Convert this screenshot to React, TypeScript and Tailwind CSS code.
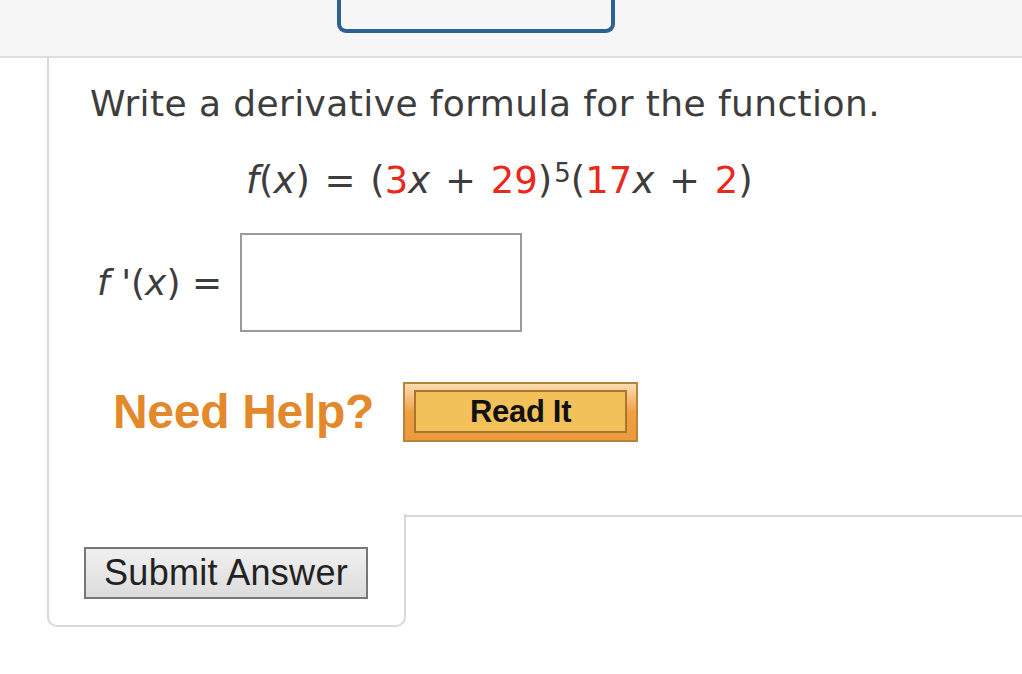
import React from "react";

const verdana = { fontFamily: '"DejaVu Sans", Verdana, sans-serif' };
const arial = { fontFamily: '"Liberation Sans", Arial, sans-serif' };

export default function App() {
  return (
    <div className="w-[1022px] h-[674px] bg-white overflow-hidden text-[#3d3d3d]" style={verdana}>
      {/* top bar */}
      <div className="h-[58px] bg-[#f6f6f6] border-b-2 border-[#dedede]">
        <div className="ml-[337px] w-[278px] h-[33px] border-[4px] border-t-0 border-[#2c6195] rounded-b-[9px]" />
      </div>

      {/* question panel */}
      <div className="ml-[47px] h-[456px] border-l-2 border-[#d9d9d9] pl-[41px] pt-[25px]">
        <p className="text-[36px] leading-[42px] tracking-[0.4px] whitespace-nowrap">
          Write a derivative formula for the function.
        </p>

        <div className="mt-[35px] ml-[156px] text-[37px] leading-[42px] whitespace-nowrap [word-spacing:3px]">
          <i>f</i>(<i>x</i>) = (<span className="text-[#e8291c]">3</span><i>x</i> + <span className="text-[#e8291c]">29</span>)
          <span className="text-[26px] relative -top-[11px] ml-[2px]">5</span>(<span className="text-[#e8291c]">17</span><i>x</i> + <span className="text-[#e8291c]">2</span>)
        </div>

        <div className="mt-[28px] flex items-center">
          <span className="ml-[7px] text-[36px] leading-[42px] whitespace-nowrap">
            <i>f</i> '(<i>x</i>) =
          </span>
          <div className="ml-[18px] w-[282px] h-[99px] border-2 border-[#9a9a9a] bg-white" />
        </div>

        <div className="mt-[50px] ml-[23px] flex items-center" style={arial}>
          <span className="text-[48px] font-bold text-[#e4882c] tracking-[-0.3px] leading-none">Need Help?</span>
          <div className="ml-[29px] w-[235px] h-[60px] border-2 border-[#b7843f] bg-gradient-to-b from-[#fbdcb0] via-[#f0a040] to-[#eb9a3c] px-[9px] pt-[6px] pb-[7px]">
            <div className="h-full border-2 border-[#a8772f] bg-[#f3c15a] flex items-center justify-center">
              <span className="text-[31px] font-bold text-[#111] leading-none tracking-[-0.3px]">Read It</span>
            </div>
          </div>
        </div>
      </div>

      {/* submit tab */}
      <div className="flex">
        <div className="ml-[47px] w-[359px] h-[113px] border-l-2 border-r-2 border-b-2 border-[#d9d9d9] rounded-b-[10px] pl-[35px] pt-[33px]">
          <button
            className="w-[284px] h-[52px] border-2 border-[#777] bg-gradient-to-b from-[#f0f0f0] to-[#dcdcdc] text-[36px] text-[#222] leading-none tracking-[0.3px]"
            style={arial}
          >
            Submit Answer
          </button>
        </div>
        <div className="flex-1 border-t-2 border-[#d6d6d6] mt-[1px]" />
      </div>
    </div>
  );
}
